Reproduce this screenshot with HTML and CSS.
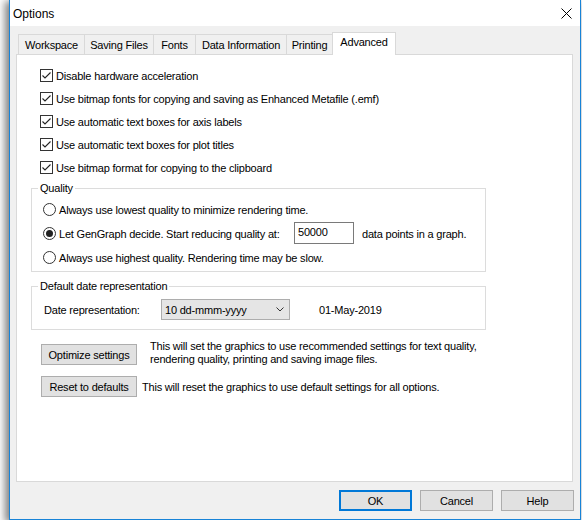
FILE: index.html
```
<!DOCTYPE html>
<html>
<head>
<meta charset="utf-8">
<link rel="stylesheet" href="styles.css">
</head>
<body>
<div class="dialog">
  <div class="titlebar">
    <span class="title">Options</span>
    <svg class="close" width="11" height="11" viewBox="0 0 11 11"><path d="M0.5 0.5 L10.5 10.5 M10.5 0.5 L0.5 10.5" stroke="#000" stroke-width="1" fill="none"/></svg>
  </div>
  <div class="body">
    <div class="tabs">
      <div class="tab t1">Workspace</div>
      <div class="tab t2">Saving Files</div>
      <div class="tab t3">Fonts</div>
      <div class="tab t4">Data Information</div>
      <div class="tab t5">Printing</div>
      <div class="tab sel">Advanced</div>
    </div>
    <div class="panel">
      <div class="checks">
        <div class="crow"><span class="cb"><svg width="11" height="11" viewBox="0 0 11 11"><path d="M1.5 5.5 L4 8 L9.5 2.5" stroke="#222" stroke-width="1.1" fill="none"/></svg></span><span>Disable hardware acceleration</span></div>
        <div class="crow"><span class="cb"><svg width="11" height="11" viewBox="0 0 11 11"><path d="M1.5 5.5 L4 8 L9.5 2.5" stroke="#222" stroke-width="1.1" fill="none"/></svg></span><span>Use bitmap fonts for copying and saving as Enhanced Metafile (.emf)</span></div>
        <div class="crow"><span class="cb"><svg width="11" height="11" viewBox="0 0 11 11"><path d="M1.5 5.5 L4 8 L9.5 2.5" stroke="#222" stroke-width="1.1" fill="none"/></svg></span><span>Use automatic text boxes for axis labels</span></div>
        <div class="crow"><span class="cb"><svg width="11" height="11" viewBox="0 0 11 11"><path d="M1.5 5.5 L4 8 L9.5 2.5" stroke="#222" stroke-width="1.1" fill="none"/></svg></span><span>Use automatic text boxes for plot titles</span></div>
        <div class="crow"><span class="cb"><svg width="11" height="11" viewBox="0 0 11 11"><path d="M1.5 5.5 L4 8 L9.5 2.5" stroke="#222" stroke-width="1.1" fill="none"/></svg></span><span>Use bitmap format for copying to the clipboard</span></div>
      </div>

      <fieldset class="group quality">
        <legend>Quality</legend>
        <div class="rrow"><span class="radio"></span><span>Always use lowest quality to minimize rendering time.</span></div>
        <div class="rrow"><span class="radio on"><span class="dot"></span></span><span class="rlabel">Let GenGraph decide. Start reducing quality at:</span><span class="textbox">50000</span><span class="after">data points in a graph.</span></div>
        <div class="rrow"><span class="radio"></span><span>Always use highest quality. Rendering time may be slow.</span></div>
      </fieldset>

      <fieldset class="group date">
        <legend>Default date representation</legend>
        <div class="drow">
          <span class="dlabel">Date representation:</span>
          <span class="combo"><span>10 dd-mmm-yyyy</span><svg width="8" height="5" viewBox="0 0 8 5"><path d="M0.5 0.5 L4 4 L7.5 0.5" stroke="#333" stroke-width="1" fill="none"/></svg></span>
          <span class="dval">01-May-2019</span>
        </div>
      </fieldset>

      <div class="brow first">
        <span class="btn">Optimize settings</span>
        <span class="bdesc">This will set the graphics to use recommended settings for text quality,<br>rendering quality, printing and saving image files.</span>
      </div>
      <div class="brow second">
        <span class="btn">Reset to defaults</span>
        <span class="bdesc2">This will reset the graphics to use default settings for all options.</span>
      </div>
    </div>
    <div class="footer">
      <span class="btn fbtn ok">OK</span>
      <span class="btn fbtn">Cancel</span>
      <span class="btn fbtn">Help</span>
    </div>
  </div>
</div>
</body>
</html>
```
FILE: styles.css
```
html, body {
  margin: 0;
  padding: 0;
  background: #ffffff;
}
body {
  font-family: "Liberation Sans", Arial, sans-serif;
  font-size: 11px;
  color: #000;
}
.dialog {
  margin-left: 9px;
  width: 572px;
  height: 520px;
  box-sizing: border-box;
  border: 1px solid #1883d7;
  border-top: none;
  background: #f0f0f0;
  box-shadow: -3px 2px 8px 1px rgba(0,0,0,0.5);
  display: flex;
  flex-direction: column;
}
.titlebar {
  height: 26px;
  background: #fff;
  display: flex;
  align-items: center;
  justify-content: space-between;
  padding: 0 8px 0 3px;
}
.title {
  font-size: 12px;
  padding-top: 1px;
}
.close {
  display: block;
  margin-top: 1px;
}
.body {
  padding: 7px 6px 0 6px;
  letter-spacing: -0.2px;
}
.tabs {
  display: flex;
  align-items: flex-end;
  padding-left: 2px;
  height: 21px;
  position: relative;
  z-index: 2;
}
.tab {
  box-sizing: border-box;
  height: 20px;
  border: 1px solid #d9d9d9;
  border-bottom: none;
  background: #f0f0f0;
  margin-right: -1px;
  margin-bottom: 0;
  display: flex;
  align-items: center;
  justify-content: center;
  padding-top: 1px;
}
.t1 { width: 67px; }
.t2 { width: 70px; }
.t3 { width: 43px; }
.t4 { width: 92px; }
.t5 { width: 47px; }
.tab.sel {
  width: 64px;
  height: 23px;
  background: #fff;
  margin-bottom: -1px;
  align-items: flex-start;
  padding-top: 3px;
  position: relative;
}
.panel {
  box-sizing: border-box;
  width: 557px;
  height: 428px;
  border: 1px solid #d9d9d9;
  background: #fff;
  padding-top: 9px;
}
.checks {
  padding-left: 23px;
}
.crow {
  height: 23px;
  display: flex;
  align-items: center;
}
.cb {
  box-sizing: border-box;
  width: 13px;
  height: 13px;
  border: 1px solid #333;
  background: #fff;
  margin-right: 3px;
  display: flex;
  align-items: center;
  justify-content: center;
}
.cb svg { display: block; }
.group {
  margin: 3px 0 0 14px;
  width: 455px;
  box-sizing: border-box;
  border: 1px solid #dcdcdc;
  padding: 0;
  min-width: 0;
}
.group legend {
  padding: 0 2px;
  margin-left: 6px;
  line-height: 13px;
}
.quality {
  padding: 3px 0 2px 0;
}
.rrow {
  height: 23px;
  display: flex;
  align-items: center;
  padding-left: 11px;
}
.rrow + .rrow { margin-top: 1px; }
.radio {
  box-sizing: border-box;
  width: 13px;
  height: 13px;
  border: 1px solid #333;
  border-radius: 50%;
  background: #fff;
  margin-right: 3px;
  display: flex;
  align-items: center;
  justify-content: center;
}
.radio .dot {
  width: 7px;
  height: 7px;
  border-radius: 50%;
  background: #222;
}
.rlabel {
  width: 235px;
}
.textbox {
  box-sizing: border-box;
  width: 60px;
  height: 22px;
  border: 1px solid #7a7a7a;
  padding: 3px 0 0 3px;
  align-self: flex-start;
}
.after {
  margin-left: 8px;
}
.date {
  margin-top: 8px;
  padding: 6px 0 9px 0;
}
.drow {
  display: flex;
  align-items: center;
  padding-left: 12px;
  height: 21px;
}
.dlabel {
  width: 117px;
}
.combo {
  box-sizing: border-box;
  width: 129px;
  height: 21px;
  background: #e5e5e5;
  border: 1px solid #adadad;
  display: flex;
  align-items: center;
  justify-content: space-between;
  padding: 0 5px 0 3px;
}
.combo svg { display: block; }
.dval {
  margin-left: 29px;
}
.brow {
  display: flex;
  padding-left: 24px;
}
.brow.first {
  margin-top: 10px;
  align-items: flex-start;
}
.brow.first .btn { margin-top: 4px; }
.brow.second {
  margin-top: 10px;
  align-items: center;
}
.btn {
  box-sizing: border-box;
  width: 96px;
  height: 21px;
  background: #e1e1e1;
  border: 1px solid #adadad;
  display: flex;
  align-items: center;
  justify-content: center;
  flex: none;
}
.bdesc {
  margin-left: 13px;
  line-height: 13px;
}
.bdesc2 {
  margin-left: 5px;
}
.footer {
  display: flex;
  justify-content: flex-end;
  gap: 8px;
  margin-top: 8px;
}
.fbtn {
  width: 73px;
}
.ok {
  border: 1px solid #0078d7;
  box-shadow: inset 0 0 0 1px #0078d7;
}
```
